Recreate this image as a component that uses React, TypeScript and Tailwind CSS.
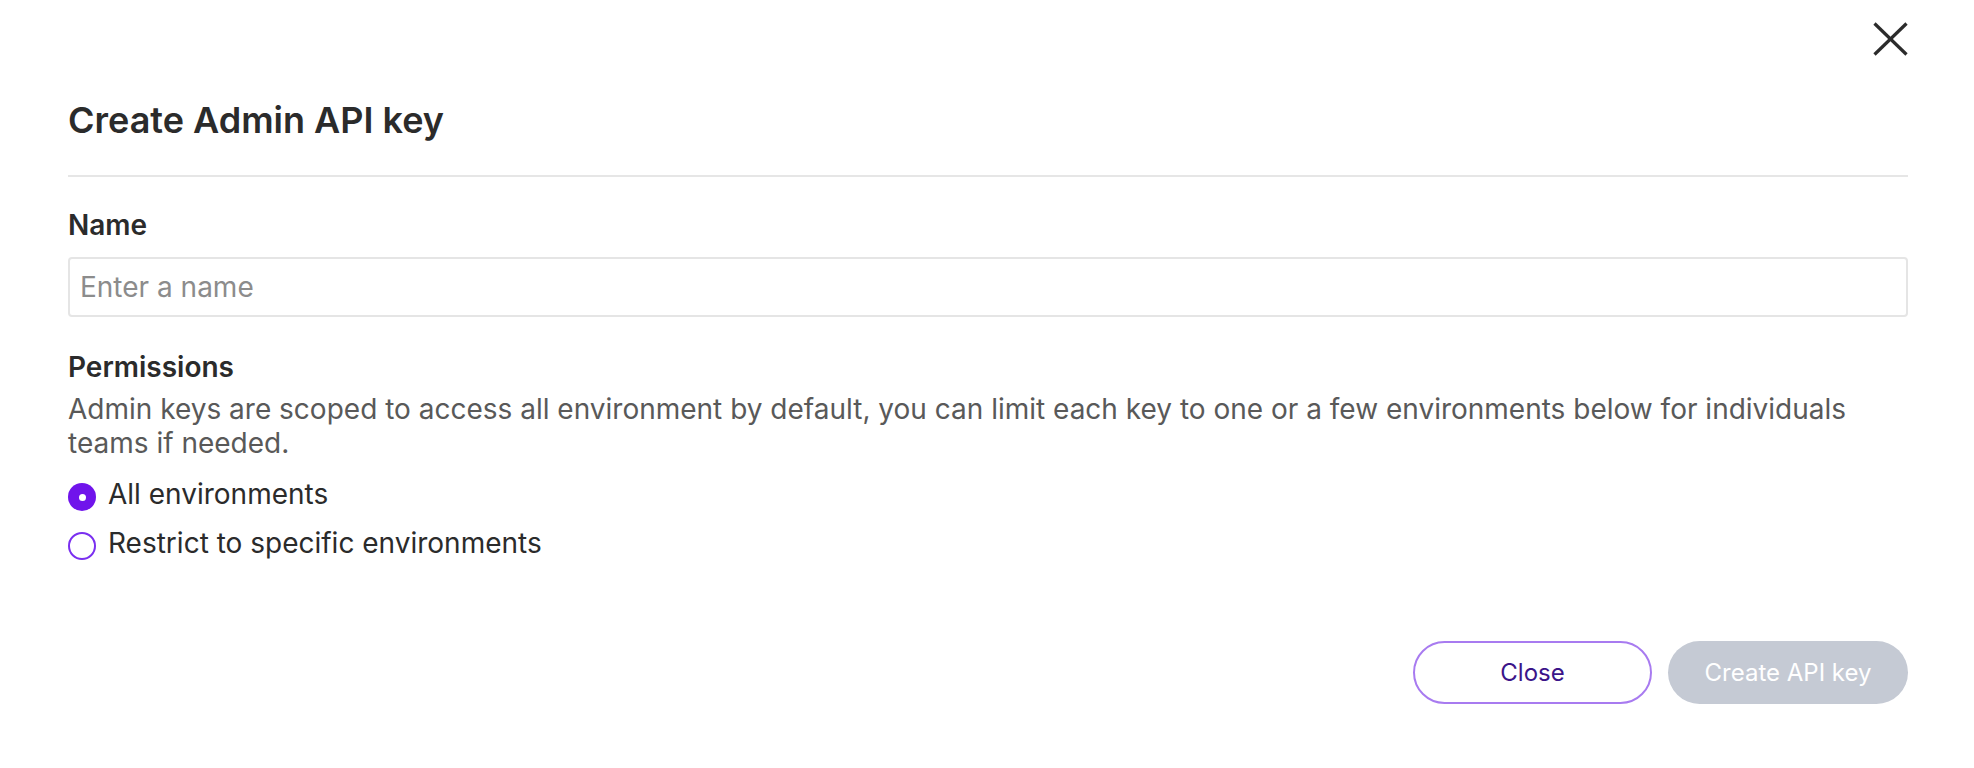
import { useState } from "react";

export default function App() {
  const [scope, setScope] = useState<"all" | "restrict">("all");
  const [name, setName] = useState("");

  return (
    <div className="relative min-h-[768px] w-full bg-white pl-[68px] pr-[66px] pt-[98px] font-['Inter',sans-serif] text-[#2b2b2b]">
      {/* close icon over the dialog corner */}
      <button className="absolute right-[66px] top-[22px]" aria-label="Close dialog">
        <svg width="35" height="34" viewBox="0 0 35 34" fill="none">
          <line x1="1.5" y1="1.5" x2="33.5" y2="32.5" stroke="#2b2b2b" strokeWidth="3.2" />
          <line x1="33.5" y1="1.5" x2="1.5" y2="32.5" stroke="#2b2b2b" strokeWidth="3.2" />
        </svg>
      </button>

      <h1 className="text-[36px] font-semibold leading-[44px]">Create Admin API key</h1>
      <div className="mt-[33px] h-[2px] w-full bg-[#e6e6e6]" />

      <label className="mt-[32px] block text-[28px] font-semibold leading-[32px]">Name</label>
      <input
        value={name}
        onChange={(e) => setName(e.target.value)}
        placeholder="Enter a name"
        className="mt-[16px] block h-[60px] w-full rounded-[4px] border-2 border-[#e5e5e5] px-[10px] text-[28px] text-[#2b2b2b] outline-none placeholder:text-[#8c8c8c]"
      />

      <div className="mt-[34px] text-[28px] font-semibold leading-[32px]">Permissions</div>
      <p className="mt-[9px] text-[28px] leading-[34px] text-[#595959]">
        Admin keys are scoped to access all environment by default, you can limit each key to one or a few
        environments below for individuals teams if needed.
      </p>

      <div className="mt-[16px] flex flex-col gap-[13px]">
        <label className="flex h-[36px] cursor-pointer items-start gap-[12px]" onClick={() => setScope("all")}>
          {scope === "all" ? (
            <span className="mt-[7px] flex h-[28px] w-[28px] items-center justify-center rounded-full bg-[#7014eb]">
              <span className="h-[7px] w-[7px] rounded-full bg-white" />
            </span>
          ) : (
            <span className="mt-[7px] h-[28px] w-[28px] rounded-full border-2 border-[#7a2ff0]" />
          )}
          <span className="text-[28px] leading-[36px]">All environments</span>
        </label>
        <label className="flex h-[36px] cursor-pointer items-start gap-[12px]" onClick={() => setScope("restrict")}>
          {scope === "restrict" ? (
            <span className="mt-[7px] flex h-[28px] w-[28px] items-center justify-center rounded-full bg-[#7014eb]">
              <span className="h-[7px] w-[7px] rounded-full bg-white" />
            </span>
          ) : (
            <span className="mt-[7px] h-[28px] w-[28px] rounded-full border-2 border-[#7a2ff0]" />
          )}
          <span className="text-[28px] leading-[36px]">Restrict to specific environments</span>
        </label>
      </div>

      <div className="mt-[80px] flex justify-end gap-[16px]">
        <button className="h-[63px] w-[239px] rounded-full border-2 border-[#a87bf0] bg-white text-[24px] text-[#3b1489]">
          Close
        </button>
        <button disabled className="h-[63px] w-[240px] rounded-full bg-[#c5cad4] text-[24px] text-white">
          Create API key
        </button>
      </div>
    </div>
  );
}
